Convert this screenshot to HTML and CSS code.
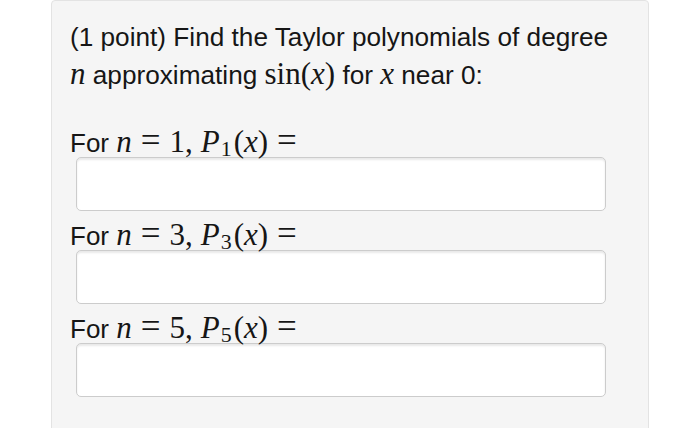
FILE: index.html
```html
<!DOCTYPE html>
<html>
<head>
<meta charset="utf-8">
<link rel="stylesheet" href="styles.css">
</head>
<body>
<div class="card">
  <p class="intro">(1 point) Find the Taylor polynomials of degree <span class="m"><i>n</i></span> approximating <span class="m">sin(<i>x</i>)</span> for <span class="m"><i>x</i></span> near 0:</p>
  <div class="item">
    <div class="label">For <span class="m"><i>n</i><span class="rel">=</span>1,<span class="thin"></span><i>P</i><sub>1</sub>(<i>x</i>)<span class="rel">=</span></span></div>
    <input class="answer" type="text">
  </div>
  <div class="item">
    <div class="label">For <span class="m"><i>n</i><span class="rel">=</span>3,<span class="thin"></span><i>P</i><sub>3</sub>(<i>x</i>)<span class="rel">=</span></span></div>
    <input class="answer" type="text">
  </div>
  <div class="item">
    <div class="label">For <span class="m"><i>n</i><span class="rel">=</span>5,<span class="thin"></span><i>P</i><sub>5</sub>(<i>x</i>)<span class="rel">=</span></span></div>
    <input class="answer" type="text">
  </div>
</div>
</body>
</html>
```
FILE: styles.css
```css
html, body {
  margin: 0;
  padding: 0;
  background: #ffffff;
  overflow: hidden;
  height: 428px;
}
body {
  font-family: "Liberation Sans", Arial, Helvetica, sans-serif;
  color: #161616;
}
.card {
  box-sizing: border-box;
  margin-left: 51px;
  width: 598px;
  height: 460px;
  background: #f5f5f5;
  border: 1px solid #e3e3e3;
  border-radius: 4px;
  padding: 17px 18px 0 18px;
}
.intro {
  margin: 0 0 29px 0;
  max-width: 545px;
  font-size: 26.2px;
  line-height: 38px;
}
.m {
  font-family: "Liberation Serif", "Times New Roman", serif;
  font-size: 31px;
  line-height: 1;
}
.m i {
  font-style: italic;
}
.m sub {
  font-size: 0.707em;
  line-height: 1;
  vertical-align: -0.2em;
  padding-left: 1px;
  padding-right: 2px;
}
.rel {
  font-size: 35px;
  line-height: 1;
  padding: 0 9px 0 9px;
}
.thin {
  display: inline-block;
  width: 8px;
}
.label {
  font-size: 26px;
  line-height: 32px;
  height: 32px;
  margin-bottom: 2px;
}
.answer {
  display: block;
  box-sizing: border-box;
  margin: 0 0 5px 6px;
  width: 530px;
  height: 54px;
  background: #ffffff;
  border: 1px solid #cccccc;
  border-radius: 5px;
  box-shadow: inset 0 2px 2px rgba(0, 0, 0, 0.09);
  outline: none;
  padding: 0 8px;
}
```
